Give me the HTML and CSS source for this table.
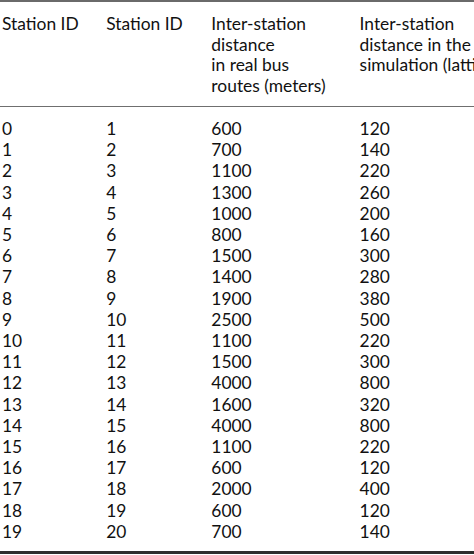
FILE: index.html
```html
<!DOCTYPE html>
<html>
<head>
<meta charset="utf-8">
<link rel="stylesheet" href="styles.css">
</head>
<body>
<table class="data">
  <thead>
    <tr>
      <th class="c1">Station ID</th>
      <th class="c2">Station ID</th>
      <th class="c3">Inter-station<br>distance<br>in real bus<br>routes (meters)</th>
      <th class="c4">Inter-station<br>distance in the<br>simulation (lattice)</th>
    </tr>
  </thead>
  <tbody>
    <tr><td>0</td><td>1</td><td>600</td><td>120</td></tr>
    <tr><td>1</td><td>2</td><td>700</td><td>140</td></tr>
    <tr><td>2</td><td>3</td><td>1100</td><td>220</td></tr>
    <tr><td>3</td><td>4</td><td>1300</td><td>260</td></tr>
    <tr><td>4</td><td>5</td><td>1000</td><td>200</td></tr>
    <tr><td>5</td><td>6</td><td>800</td><td>160</td></tr>
    <tr><td>6</td><td>7</td><td>1500</td><td>300</td></tr>
    <tr><td>7</td><td>8</td><td>1400</td><td>280</td></tr>
    <tr><td>8</td><td>9</td><td>1900</td><td>380</td></tr>
    <tr><td>9</td><td>10</td><td>2500</td><td>500</td></tr>
    <tr><td>10</td><td>11</td><td>1100</td><td>220</td></tr>
    <tr><td>11</td><td>12</td><td>1500</td><td>300</td></tr>
    <tr><td>12</td><td>13</td><td>4000</td><td>800</td></tr>
    <tr><td>13</td><td>14</td><td>1600</td><td>320</td></tr>
    <tr><td>14</td><td>15</td><td>4000</td><td>800</td></tr>
    <tr><td>15</td><td>16</td><td>1100</td><td>220</td></tr>
    <tr><td>16</td><td>17</td><td>600</td><td>120</td></tr>
    <tr><td>17</td><td>18</td><td>2000</td><td>400</td></tr>
    <tr><td>18</td><td>19</td><td>600</td><td>120</td></tr>
    <tr><td>19</td><td>20</td><td>700</td><td>140</td></tr>
  </tbody>
</table>
</body>
</html>
```
FILE: styles.css
```css
html, body {
  margin: 0;
  padding: 0;
  background: #fff;
  overflow: hidden;
}
body {
  width: 474px;
  height: 555px;
}
.data {
  border-collapse: collapse;
  table-layout: fixed;
  width: 560px;
  font-family: Lato, "Open Sans", sans-serif;
  font-size: 17.4px;
  color: #111;
  border-top: 2px solid #6a6a6a;
  border-bottom: 3px solid #2e2e2e;
}
.data th, .data td {
  text-align: left;
  vertical-align: top;
  padding: 0 0 0 2px;
  font-weight: normal;
  white-space: nowrap;
}
.data th {
  line-height: 20.5px;
  padding-top: 12px;
  padding-bottom: 10px;
  border-bottom: 1px solid #6f6f6f;
}
.c1 { width: 102px; }
.c2 { width: 103px; }
.c3 { width: 146px; }
.c4 { width: 200px; }
.data td {
  line-height: 21.2px;
  height: 21.2px;
}
.data tbody tr:first-child td { padding-top: 11px; }
.data tbody tr:last-child td { padding-bottom: 9px; }
```
